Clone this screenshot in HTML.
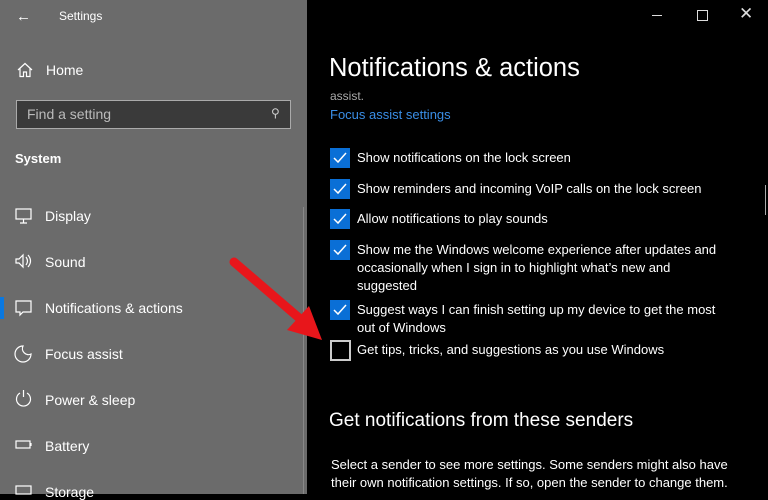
<!DOCTYPE html>
<html><head><style>
body{margin:0;width:768px;height:494px;overflow:hidden;position:relative;background:#000;font-family:"Liberation Sans",sans-serif;}
#side{position:absolute;left:0;top:0;width:307px;height:494px;background:#6b6b6b;color:#fff;}
.t{position:absolute;white-space:nowrap;}
.it{position:absolute;left:45px;font-size:14px;color:#fff;}
.cb{position:absolute;left:330px;width:20px;height:20px;background:#0a6fd6;}
.cb svg{position:absolute;left:2px;top:3px}
.lb{position:absolute;left:357px;font-size:13px;color:#fff;line-height:18px;width:372px;}
</style></head><body>
<div id="side">
<div class="t" style="left:16px;top:8px;font-size:15px;">&#8592;</div>
<div class="t" style="left:59px;top:9px;font-size:12px;">Settings</div>
<svg style="position:absolute;left:17px;top:62px" width="16" height="16" viewBox="0 0 16 16" fill="none" stroke="#fff" stroke-width="1.2"><path d="M1 8L8 1.5 15 8M3 6.5V14.5H6.5V10H9.5V14.5H13V6.5"/></svg>
<div class="t" style="left:46px;top:62px;font-size:14px;">Home</div>
<div style="position:absolute;left:16px;top:100px;width:273px;height:27px;border:1px solid #aaa;background:#3a3a3a;"></div>
<div class="t" style="left:27px;top:106px;font-size:14px;color:#bbb;">Find a setting</div>
<div class="t" style="left:271px;top:106px;font-size:12px;color:#ccc;">&#9906;</div>
<div class="t" style="left:15px;top:151px;font-size:13px;font-weight:bold;">System</div>
<div class="it" style="top:208px">Display</div>
<div class="it" style="top:254px">Sound</div>
<div class="it" style="top:300px">Notifications &amp; actions</div>
<div class="it" style="top:346px">Focus assist</div>
<div class="it" style="top:392px">Power &amp; sleep</div>
<div class="it" style="top:438px">Battery</div>
<div class="it" style="top:484px">Storage</div>
<div style="position:absolute;left:0;top:297px;width:4px;height:22px;background:#0a78e0"></div>
<svg style="position:absolute;left:14px;top:206px" width="20" height="290" fill="none" stroke="#fff" stroke-width="1.2">
<rect x="2" y="3" width="15" height="10"/><path d="M9.5 13v4M6 17h7"/>
<path d="M2 53h3l4-4v12l-4-4H2zM12 51q3 4 0 8M14 49q5 6 0 12"/>
<path d="M2 95h15v11H9l-3 3v-3H2z"/>
<path d="M9 140a8 8 0 1 0 8 8a6 6 0 0 1-8-8z"/>
<path d="M6 187a7 7 0 1 0 7 0M9.5 184v7"/>
<rect x="2" y="235" width="14" height="7"/><path d="M17 237v3"/>
<rect x="2" y="280" width="15" height="8"/>
</svg>
<div style="position:absolute;left:303px;top:207px;width:1px;height:287px;background:#888"></div>
</div>
<div style="position:absolute;left:652px;top:15px;width:10px;height:1px;background:#ddd"></div>
<div style="position:absolute;left:697px;top:10px;width:9px;height:9px;border:1px solid #ddd"></div>
<div class="t" style="left:739px;top:4px;color:#ddd;font-size:17px;">&#10005;</div>
<div class="t" style="left:329px;top:54px;font-size:25.5px;color:#fff;">Notifications &amp; actions</div>
<div class="t" style="left:330px;top:89px;font-size:12px;color:#aaa;">assist.</div>
<div class="t" style="left:330px;top:107px;font-size:13px;color:#3a8ee6;">Focus assist settings</div>
<div class="cb" style="top:148px"><svg width="16" height="14"><path d="M2 7l4 4 8-9" stroke="#fff" stroke-width="1.5" fill="none"/></svg></div>
<div class="lb" style="top:149px">Show notifications on the lock screen</div>
<div class="cb" style="top:179px"><svg width="16" height="14"><path d="M2 7l4 4 8-9" stroke="#fff" stroke-width="1.5" fill="none"/></svg></div>
<div class="lb" style="top:180px;width:400px">Show reminders and incoming VoIP calls on the lock screen</div>
<div class="cb" style="top:209px"><svg width="16" height="14"><path d="M2 7l4 4 8-9" stroke="#fff" stroke-width="1.5" fill="none"/></svg></div>
<div class="lb" style="top:210px">Allow notifications to play sounds</div>
<div class="cb" style="top:240px"><svg width="16" height="14"><path d="M2 7l4 4 8-9" stroke="#fff" stroke-width="1.5" fill="none"/></svg></div>
<div class="lb" style="top:241px">Show me the Windows welcome experience after updates and occasionally when I sign in to highlight what’s new and suggested</div>
<div class="cb" style="top:300px"><svg width="16" height="14"><path d="M2 7l4 4 8-9" stroke="#fff" stroke-width="1.5" fill="none"/></svg></div>
<div class="lb" style="top:301px;width:365px">Suggest ways I can finish setting up my device to get the most out of Windows</div>
<div style="position:absolute;left:330px;top:340px;width:17px;height:17px;border:2px solid #ccc"></div>
<div class="lb" style="top:341px;width:400px">Get tips, tricks, and suggestions as you use Windows</div>
<div class="t" style="left:329px;top:410px;font-size:19px;color:#fff;">Get notifications from these senders</div>
<div class="lb" style="left:331px;top:456px;width:420px;">Select a sender to see more settings. Some senders might also have their own notification settings. If so, open the sender to change them.</div>
<div style="position:absolute;left:765px;top:185px;width:1px;height:30px;background:#aaa"></div>
<svg style="position:absolute;left:0;top:0" width="768" height="494"><path d="M234 262L298 317" stroke="#e8161b" stroke-width="9" stroke-linecap="round"/><polygon points="322,340 287,330 309,306" fill="#e8161b"/></svg>
</body></html>
